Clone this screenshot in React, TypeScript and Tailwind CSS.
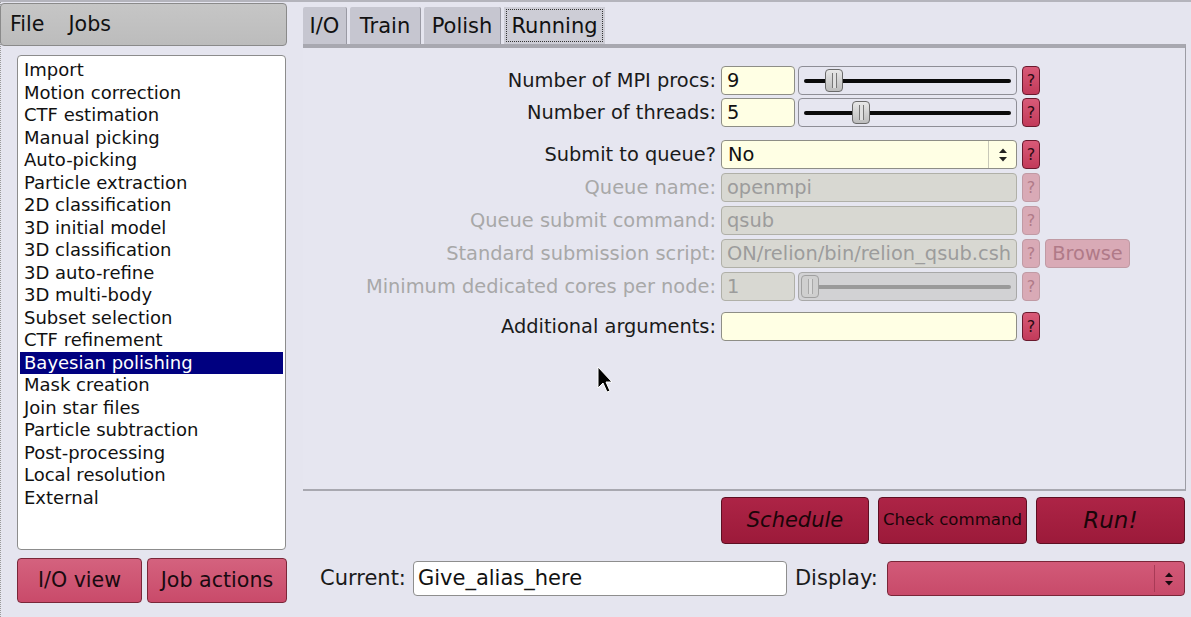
import React from "react";

const FONT = { fontFamily: '"DejaVu Sans", "Liberation Sans", sans-serif' };

const jobs = [
  "Import",
  "Motion correction",
  "CTF estimation",
  "Manual picking",
  "Auto-picking",
  "Particle extraction",
  "2D classification",
  "3D initial model",
  "3D classification",
  "3D auto-refine",
  "3D multi-body",
  "Subset selection",
  "CTF refinement",
  "Bayesian polishing",
  "Mask creation",
  "Join star files",
  "Particle subtraction",
  "Post-processing",
  "Local resolution",
  "External",
];

function Help({ disabled }: { disabled?: boolean }) {
  return (
    <div
      className={
        disabled
          ? "w-[18px] h-[29px] ml-[5px] rounded-[4px] border border-[#c09aa4] bg-[#d9aab6] text-[#b07a88] flex items-center justify-center text-[16px] leading-none"
          : "w-[18px] h-[29px] ml-[5px] rounded-[4px] border border-[#6a1a2e] bg-gradient-to-b from-[#d85a78] to-[#c23a5a] text-[#2a0a12] flex items-center justify-center text-[16px] leading-none"
      }
    >
      ?
    </div>
  );
}

function Slider({ pos, disabled }: { pos: number; disabled?: boolean }) {
  return (
    <div
      className={
        disabled
          ? "relative w-[219px] h-[29px] ml-[3px] rounded-[4px] border border-[#a8a8a8] bg-[#d2d2d4]"
          : "relative w-[219px] h-[29px] ml-[3px] rounded-[4px] border border-[#8e8e96] bg-[#e6e6f0]"
      }
    >
      <div
        className={
          disabled
            ? "absolute left-[5px] right-[5px] top-[12px] h-[4px] rounded-full bg-[#9a9a9a]"
            : "absolute left-[5px] right-[5px] top-[12px] h-[4px] rounded-full bg-[#0a0a0a]"
        }
      />
      <div
        className={
          disabled
            ? "absolute top-[2px] w-[18px] h-[23px] rounded-[4px] border border-[#a0a0a0] bg-[#cfcfcf] flex items-center justify-center"
            : "absolute top-[2px] w-[18px] h-[23px] rounded-[4px] border border-[#6a6a6a] bg-gradient-to-b from-[#e8e8e8] to-[#bdbdbd] flex items-center justify-center"
        }
        style={{ left: pos }}
      >
        <div
          className={
            disabled
              ? "w-[5px] h-[15px] border-l border-r border-[#a8a8a8] bg-[#dadada]"
              : "w-[5px] h-[15px] border-l border-r border-[#777] bg-[#e0e0e0]"
          }
        />
      </div>
    </div>
  );
}

function UpDown({ color }: { color: string }) {
  return (
    <svg width="10" height="16" viewBox="0 0 10 16">
      <path d="M1 6 L5 1.5 L9 6 Z" fill={color} />
      <path d="M1 10 L5 14.5 L9 10 Z" fill={color} />
    </svg>
  );
}

function Label({ children, disabled }: { children: React.ReactNode; disabled?: boolean }) {
  return (
    <div
      className={
        disabled
          ? "w-[418px] pr-[5px] text-right text-[19.4px] text-[#a8a8a8] leading-none whitespace-nowrap"
          : "w-[418px] pr-[5px] text-right text-[19.4px] text-[#1a1a1a] leading-none whitespace-nowrap"
      }
    >
      {children}
    </div>
  );
}

function Field({
  value,
  disabled,
  w,
}: {
  value: string;
  disabled?: boolean;
  w: string;
}) {
  return (
    <div
      className={
        (disabled
          ? "h-[29px] rounded-[4px] border border-[#b0b0a8] bg-[#d8d8d2] text-[#9c9c9c] "
          : "h-[29px] rounded-[4px] border border-[#8e8e86] bg-[#ffffe4] text-[#111] ") +
        w +
        " flex items-center pl-[5px] text-[19.4px] leading-none overflow-hidden whitespace-nowrap"
      }
    >
      {value}
    </div>
  );
}

export default function App() {
  return (
    <div
      className="relative w-[1191px] h-[617px] overflow-hidden bg-[#e5e5ef] border-t-2 border-[#b4b4bc]"
      style={FONT}
    >
      <div className="flex h-full">
        {/* Left column */}
        <div className="w-[303px] flex flex-col border-l border-dotted border-[#9a9a9a]">
          <div className="mt-[1px] ml-[-1px] w-[287px] h-[43px] rounded-[4px] border border-[#8a8a8a] bg-gradient-to-b from-[#c6c6c6] to-[#bcbcbc] flex items-center text-[20.6px] text-[#111] leading-none">
            <span className="ml-[9px]">File</span>
            <span className="ml-[24px]">Jobs</span>
          </div>
          <div className="ml-[16px] mt-[9px] w-[269px] h-[495px] rounded-[4px] border border-[#8c8c8c] bg-white pt-[3px] overflow-hidden">
            {jobs.map((j) => (
              <div
                key={j}
                className={
                  j === "Bayesian polishing"
                    ? "mx-[2px] pl-[4px] h-[22.5px] flex items-center bg-[#000080] text-white text-[18px] leading-none whitespace-nowrap"
                    : "mx-[2px] pl-[4px] h-[22.5px] flex items-center text-[#111] text-[18px] leading-none whitespace-nowrap"
                }
              >
                {j}
              </div>
            ))}
          </div>
          <div className="ml-[16px] mt-[8px] flex gap-[5px]">
            <div className="w-[125px] h-[45px] rounded-[4px] border border-[#7a2638] bg-gradient-to-b from-[#d4627e] to-[#c94a6a] flex items-center justify-center text-[20.6px] text-[#1a0a10] leading-none">
              I/O view
            </div>
            <div className="w-[140px] h-[45px] rounded-[4px] border border-[#7a2638] bg-gradient-to-b from-[#d4627e] to-[#c94a6a] flex items-center justify-center text-[20.6px] text-[#1a0a10] leading-none">
              Job actions
            </div>
          </div>
        </div>

        {/* Right column */}
        <div className="w-[883px] flex flex-col">
          {/* Tabs */}
          <div className="mt-[5px] flex gap-[3px] h-[37px] items-stretch">
            <div className="w-[44px] bg-[#c6c6d0] rounded-t-[2px] flex items-center justify-center pt-[2px] text-[21px] text-[#111] leading-none border-r border-[#9a9aa4]">
              I/O
            </div>
            <div className="w-[71px] bg-[#c6c6d0] rounded-t-[2px] flex items-center justify-center pt-[2px] text-[21px] text-[#111] leading-none border-r border-[#9a9aa4]">
              Train
            </div>
            <div className="w-[77px] bg-[#c6c6d0] rounded-t-[2px] flex items-center justify-center pt-[2px] text-[21px] text-[#111] leading-none border-r border-[#9a9aa4]">
              Polish
            </div>
            <div className="w-[101px] bg-[#cdcdd6] p-[2px]">
              <div className="w-full h-full border border-dotted border-[#333] flex items-center justify-center pt-[2px] text-[21px] text-[#111] leading-none">
                Running
              </div>
            </div>
          </div>
          {/* Panel */}
          <div className="w-[883px] h-[447px] border-t-[4px] border-t-[#a8a8b0] border-r border-r-[#9c9ca4] border-b-2 border-b-[#a8a8b0] bg-[#e6e6f0] pt-[18px]">
            <div className="flex items-center h-[29px]">
              <Label>Number of MPI procs:</Label>
              <Field value="9" w="w-[74px]" />
              <Slider pos={26} />
              <Help />
            </div>
            <div className="flex items-center h-[29px] mt-[3px]">
              <Label>Number of threads:</Label>
              <Field value="5" w="w-[74px]" />
              <Slider pos={53} />
              <Help />
            </div>
            <div className="flex items-center h-[29px] mt-[13px]">
              <Label>Submit to queue?</Label>
              <div className="w-[296px] h-[29px] rounded-[4px] border border-[#8e8e86] bg-[#ffffe4] flex items-center text-[19.4px] text-[#111] leading-none">
                <span className="pl-[6px] flex-1">No</span>
                <div className="w-[28px] h-full border-l border-[#c8c8b8] flex items-center justify-center">
                  <UpDown color="#222" />
                </div>
              </div>
              <Help />
            </div>
            <div className="flex items-center h-[29px] mt-[4px]">
              <Label disabled>Queue name:</Label>
              <Field value="openmpi" disabled w="w-[296px]" />
              <Help disabled />
            </div>
            <div className="flex items-center h-[29px] mt-[4px]">
              <Label disabled>Queue submit command:</Label>
              <Field value="qsub" disabled w="w-[296px]" />
              <Help disabled />
            </div>
            <div className="flex items-center h-[29px] mt-[4px]">
              <Label disabled>Standard submission script:</Label>
              <Field value="ON/relion/bin/relion_qsub.csh" disabled w="w-[296px]" />
              <Help disabled />
              <div className="ml-[5px] w-[85px] h-[29px] rounded-[4px] border border-[#c09aa4] bg-[#d9aab6] text-[#b07a88] flex items-center justify-center text-[19.4px] leading-none">
                Browse
              </div>
            </div>
            <div className="flex items-center h-[29px] mt-[4px]">
              <Label disabled>Minimum dedicated cores per node:</Label>
              <Field value="1" disabled w="w-[74px]" />
              <Slider pos={2} disabled />
              <Help disabled />
            </div>
            <div className="flex items-center h-[29px] mt-[11px]">
              <Label>Additional arguments:</Label>
              <Field value="" w="w-[296px]" />
              <Help />
            </div>
          </div>

          {/* Action buttons */}
          <div className="mt-[6px] flex justify-end gap-[9px] pr-[1px]">
            <div className="w-[148px] h-[47px] rounded-[4px] border border-[#5e0f22] bg-gradient-to-b from-[#ad2446] to-[#9c1a3a] flex items-center justify-center italic text-[21px] text-[#1a0509] leading-none">
              Schedule
            </div>
            <div className="w-[149px] h-[47px] rounded-[4px] border border-[#5e0f22] bg-gradient-to-b from-[#ad2446] to-[#9c1a3a] flex items-center justify-center text-[16.6px] text-[#1a0509] leading-none whitespace-nowrap">
              Check command
            </div>
            <div className="w-[149px] h-[47px] rounded-[4px] border border-[#5e0f22] bg-gradient-to-b from-[#ad2446] to-[#9c1a3a] flex items-center justify-center italic text-[23px] text-[#1a0509] leading-none">
              Run!
            </div>
          </div>

          {/* Current / Display */}
          <div className="mt-[17px] flex items-center h-[35px]">
            <span className="ml-[17px] text-[21px] text-[#1a1a1a] leading-none">Current:</span>
            <div className="ml-[7px] w-[374px] h-[35px] rounded-[4px] border border-[#8e8e8e] bg-white flex items-center pl-[4px] text-[21px] text-[#111] leading-none">
              Give_alias_here
            </div>
            <span className="ml-[8px] text-[21px] text-[#1a1a1a] leading-none">Display:</span>
            <div className="ml-[9px] w-[298px] h-[35px] rounded-[4px] border border-[#7a2638] bg-gradient-to-b from-[#d25a78] to-[#c84a6a] flex items-center">
              <div className="flex-1" />
              <div className="w-[30px] h-[27px] border-l border-[#a83a56] flex items-center justify-center">
                <UpDown color="#1a0a10" />
              </div>
            </div>
          </div>
        </div>
      </div>

      {/* Mouse cursor */}
      <svg className="absolute left-[597px] top-[364px]" width="16" height="28" viewBox="0 0 16 28">
        <path d="M1 1 L1 22 L6 17 L10 26 L13 25 L9 16 L15 16 Z" fill="#000" stroke="#fff" strokeWidth="1" />
      </svg>
    </div>
  );
}
